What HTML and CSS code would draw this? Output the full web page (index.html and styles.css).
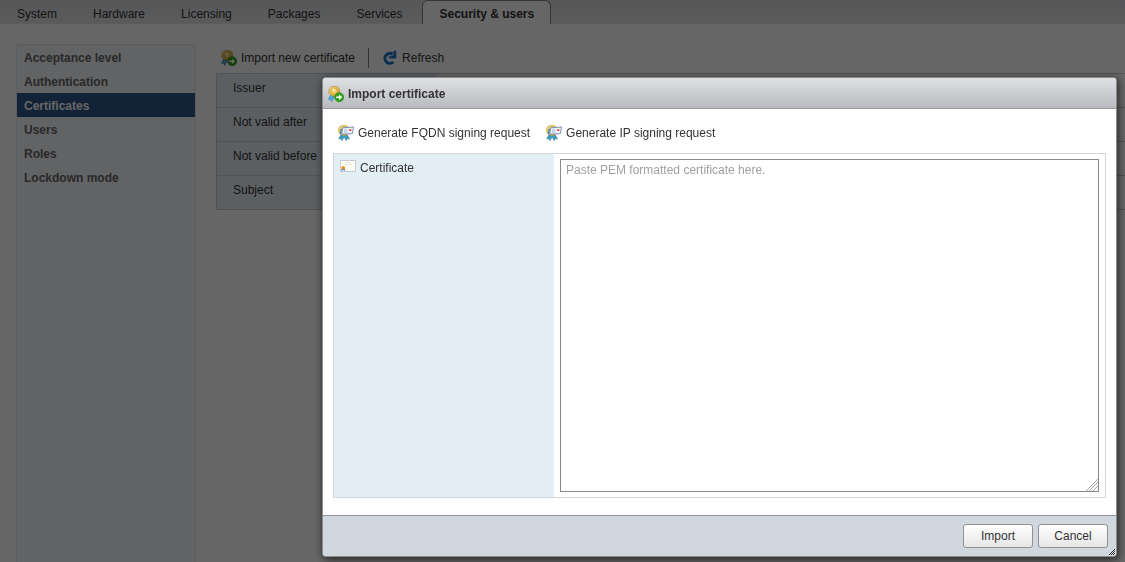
FILE: index.html
```html
<!DOCTYPE html>
<html lang="en">
<head>
    <meta charset="UTF-8">
    <meta name="viewport" content="width=device-width, initial-scale=1.0">
    <title>Security &amp; users - Certificates</title>
    <link rel="stylesheet" href="styles.css">
</head>
<body>
    <!-- Shared icons -->
    <svg class="icon-defs" width="0" height="0" aria-hidden="true">
        <defs>
            <linearGradient id="gold" x1="0" y1="0" x2="1" y2="1">
                <stop offset="0" stop-color="#f6e08a"/>
                <stop offset="1" stop-color="#cf982c"/>
            </linearGradient>
            <symbol id="icon-import" viewBox="0 0 16 16">
                <path d="M2.4 9L.4 13.4l2.1-.2 1 2.6L6.5 11z" fill="#4aa8d4" stroke="#2b7fae" stroke-width=".5"/>
                <path d="M4 .4h4.8l2.3 2 .5 3.2-1.6 3.2-3.2 1.6-3.6-.8L.9 6.8l.2-3.6z" fill="url(#gold)" stroke="#b8892a" stroke-width=".7"/>
                <circle cx="6.2" cy="5" r="3.1" fill="#f0d26c" stroke="#c9993a" stroke-width=".8"/>
                <circle cx="5.4" cy="3.9" r="1.3" fill="#fff2b4"/>
                <circle cx="11.2" cy="11.2" r="4.5" fill="#35a41d" stroke="#1f7d10" stroke-width=".6"/>
                <path d="M8.2 10.5h2.8V8.4l3.2 2.8-3.2 2.8v-2.1H8.2z" fill="#fff"/>
            </symbol>
            <symbol id="icon-request" viewBox="0 0 16 16">
                <path d="M3.5 9L.5 13.8l2.4-.1 1 2L7 10.5zM8.5 9l3.2 4.8-2.4-.1-1 2L5.6 11z" fill="#3a9cc6" stroke="#2a7fa6" stroke-width=".5"/>
                <path d="M3.6.5H8l2.6 2 .4 4.5-2 3-3.4.6-3.6-1.4L.4 6l.6-3.4z" fill="url(#gold)" stroke="#c09a3c" stroke-width=".6"/>
                <path d="M3.2 4L2.4 9.2" stroke="#3a8fc0" stroke-width="1.4"/>
                <path d="M4.6 2.8L15.6 2 14.4 8.6 3.8 9.3z" fill="#eef4fb" stroke="#6f86a8" stroke-width=".9"/>
                <path d="M6.2 5h3.2M6 7h3.2" stroke="#8aa6cf" stroke-width=".9"/>
                <path d="M11.4 4h2.1l-.3 2h-2z" fill="#e2573f"/>
            </symbol>
            <symbol id="icon-certificate" viewBox="0 0 16 16">
                <rect x=".5" y=".5" width="15" height="11" fill="#fcfbf4" stroke="#c6ccd0"/>
                <path d="M6 2.5h4M4.5 4.5h7" stroke="#e3dfcd" stroke-width=".8"/>
                <path d="M1 11L2 8h2.4l1 3-2.2-.9z" fill="#3b87be"/>
                <circle cx="3.2" cy="7.8" r="1.8" fill="#f08a1d"/>
            </symbol>
            <symbol id="icon-refresh" viewBox="0 0 16 16">
                <path d="M10.6 4.1A5 5 0 1 0 11.4 12" fill="none" stroke="#1a72cc" stroke-width="3"/>
                <path d="M14.2.8v7.6H7V6.2h2.8l1.8-1.8V.8z" fill="#1a72cc"/>
            </symbol>
        </defs>
    </svg>

    <nav class="tabs">
        <a href="#system">System</a>
        <a href="#hardware">Hardware</a>
        <a href="#licensing">Licensing</a>
        <a href="#packages">Packages</a>
        <a href="#services">Services</a>
        <a href="#security" class="active">Security &amp; users</a>
    </nav>

    <div class="page">
        <nav class="sidebar">
            <a href="#acceptance">Acceptance level</a>
            <a href="#authentication">Authentication</a>
            <a href="#certificates" class="selected">Certificates</a>
            <a href="#users">Users</a>
            <a href="#roles">Roles</a>
            <a href="#lockdown">Lockdown mode</a>
        </nav>

        <main class="content">
            <div class="toolbar">
                <button type="button" class="action"><svg class="icon"><use href="#icon-import"/></svg>Import new certificate</button>
                <span class="separator"></span>
                <button type="button" class="action"><svg class="icon"><use href="#icon-refresh"/></svg>Refresh</button>
            </div>
            <table class="details">
                <tr><th scope="row">Issuer</th><td></td></tr>
                <tr><th scope="row">Not valid after</th><td></td></tr>
                <tr><th scope="row">Not valid before</th><td></td></tr>
                <tr><th scope="row">Subject</th><td></td></tr>
            </table>
        </main>
    </div>

    <div class="overlay">
        <form class="dialog" role="dialog" aria-labelledby="dialog-title">
            <header class="dialog-header">
                <svg class="icon"><use href="#icon-import"/></svg>
                <h1 id="dialog-title">Import certificate</h1>
            </header>

            <div class="dialog-body">
                <div class="dialog-toolbar">
                    <button type="button" class="action"><svg class="icon"><use href="#icon-request"/></svg>Generate FQDN signing request</button>
                    <button type="button" class="action"><svg class="icon"><use href="#icon-request"/></svg>Generate IP signing request</button>
                </div>
                <div class="field">
                    <label for="certificate"><svg class="icon"><use href="#icon-certificate"/></svg>Certificate</label>
                    <div class="field-value">
                        <textarea id="certificate" placeholder="Paste PEM formatted certificate here."></textarea>
                    </div>
                </div>
            </div>

            <footer class="dialog-footer">
                <button type="submit" class="button">Import</button>
                <button type="button" class="button">Cancel</button>
            </footer>
            <svg class="grip" viewBox="0 0 6 6" aria-hidden="true">
                <path d="M0 6L6 0M2 6L6 2M4 6L6 4" stroke="#333" stroke-width="1"/>
            </svg>
        </form>
    </div>
</body>
</html>
```
FILE: styles.css
```css
:root {
    --text: #333;
    --line: #d3d6d8;
    --label: #e3eef5;
    --selected: #2d5589;
}

* {
    box-sizing: border-box;
}

body {
    margin: 0;
    min-height: 100vh;
    display: flex;
    flex-direction: column;
    font: 12px/16px "Liberation Sans", Arial, sans-serif;
    color: var(--text);
    background: #fff;
}

a {
    color: inherit;
    text-decoration: none;
}

button,
textarea {
    font: inherit;
    color: inherit;
}

.icon-defs {
    position: absolute;
}

.icon {
    width: 16px;
    height: 16px;
    flex: none;
}

/* Tabs */
.tabs {
    display: flex;
    gap: 2px;
    height: 24px;
    background: linear-gradient(#d8dadd, #e2e3e5);
}

.tabs a {
    padding: 6px 17px 0;
}

.tabs .active {
    margin-left: 1px;
    padding: 5px 16px 0;
    font-weight: bold;
    background: #fff;
    border: 1px solid #888;
    border-bottom: 0;
    border-radius: 6px 6px 0 0;
}

/* Page */
.page {
    flex: 1;
    display: flex;
    gap: 20px;
    padding: 20px 0 0 16px;
}

.sidebar {
    width: 180px;
    flex: none;
    background: #f6f7fa;
    border: 1px solid #e4e9ef;
    border-bottom: 0;
    font-weight: bold;
    color: #666;
}

.sidebar a {
    display: block;
    padding: 5px 7px 3px;
}

.sidebar .selected {
    color: #fff;
    background: var(--selected);
}

.content {
    flex: 1;
}

.toolbar {
    display: flex;
    align-items: center;
    gap: 13px;
    height: 29px;
    padding: 0 5px 1px;
}

.action {
    display: flex;
    align-items: center;
    gap: 4px;
    padding: 0;
    border: 0;
    background: none;
    white-space: nowrap;
}

.separator {
    width: 1px;
    height: 20px;
    background: #777;
}

.details {
    width: 100%;
    border-spacing: 0;
    border: 1px solid #c8cccf;
    border-right: 0;
}

.details th,
.details td {
    height: 34px;
    padding: 6px 16px 8px;
    border-bottom: 1px solid #c8cccf;
    text-align: left;
    vertical-align: top;
    font-weight: normal;
}

.details tr:last-child > * {
    height: 33px;
    border-bottom: 0;
}

.details th {
    width: 220px;
    background: var(--label);
}

/* Import dialog */
.overlay {
    position: fixed;
    inset: 0;
    display: flex;
    padding: 77px 8px 5px 322px;
    background: rgba(0, 0, 0, 0.6);
}

.dialog {
    position: relative;
    flex: 1;
    display: flex;
    flex-direction: column;
    background: #fff;
    border: 1px solid #8c8c8c;
    border-radius: 4px;
    box-shadow: 1px 2px 8px rgba(0, 0, 0, 0.7);
    overflow: hidden;
}

.dialog-header {
    display: flex;
    align-items: center;
    gap: 4px;
    height: 31px;
    padding: 2px 5px 0;
    background: linear-gradient(#e0e1e5, #b8babd);
    border-bottom: 1px solid #999;
}

.dialog-header h1 {
    margin: 0;
    font-size: 12px;
}

.dialog-body {
    flex: 1;
    display: flex;
    flex-direction: column;
    padding: 16px 10px 17px;
}

.dialog-toolbar {
    display: flex;
    gap: 16px;
    padding: 0 5px;
    margin-bottom: 12px;
}

.field {
    flex: 1;
    display: flex;
    border: 1px solid var(--line);
}

.field label {
    display: flex;
    gap: 4px;
    width: 220px;
    padding: 6px;
    background: var(--label);
}

.field-value {
    flex: 1;
    display: flex;
    padding: 5px 6px;
}

textarea {
    flex: 1;
    margin: 0;
    padding: 2px 5px;
    border: 1px solid #8a8a8a;
    border-radius: 0;
    background: #fff;
}

textarea::placeholder {
    color: #a0a0a0;
}

textarea::-webkit-resizer {
    background: linear-gradient(135deg, transparent 58%, #aaa 58% 62%, transparent 62% 69%, #aaa 69% 73%, transparent 73% 80%, #aaa 80% 84%, transparent 84%);
}

.dialog-footer {
    display: flex;
    justify-content: flex-end;
    gap: 5px;
    padding: 8px;
    background: #d0d7df;
    border-top: 1px solid #929497;
}

.button {
    width: 70px;
    height: 24px;
    padding: 0;
    background: linear-gradient(#fff, #e6e6e6);
    border: 1px solid #919191;
    border-radius: 3px;
}

.grip {
    position: absolute;
    right: 1px;
    bottom: 1px;
    width: 6px;
    height: 6px;
}
```
